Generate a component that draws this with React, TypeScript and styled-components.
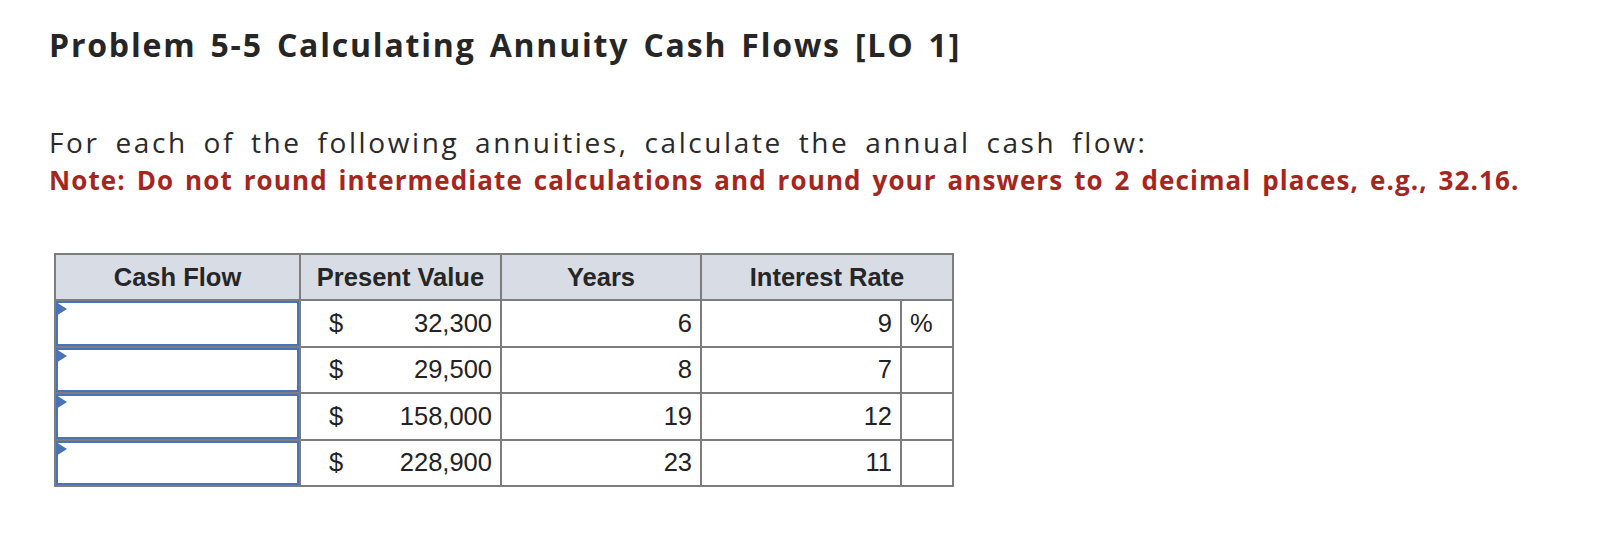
import React from "react";
import styled, { createGlobalStyle } from "styled-components";

const GlobalStyle = createGlobalStyle`
  html, body { margin: 0; padding: 0; background: #ffffff; }
  body { font-family: "Open Sans", "Lato", sans-serif; color: #2a2a2a; }
`;

const Page = styled.main`
  padding: 25px 0 0 49px;
  width: 1612px;
  height: 542px;
  box-sizing: border-box;
`;

const Title = styled.h1`
  margin: 0;
  font-family: "Open Sans", sans-serif;
  font-weight: 700;
  font-size: 32px;
  line-height: 40px;
  letter-spacing: 1.8px;
  word-spacing: 4px;
  color: #262626;
  white-space: nowrap;
`;

const Prompt = styled.p`
  margin: 59px 0 0;
  font-family: "Open Sans", sans-serif;
  font-size: 28px;
  line-height: 36px;
  letter-spacing: 2.6px;
  word-spacing: 6px;
  color: #2a2a2a;
  white-space: nowrap;
`;

const Note = styled.span`
  display: block;
  margin-top: 2px;
  font-size: 26px;
  font-weight: 700;
  letter-spacing: 1.1px;
  word-spacing: 3px;
  color: #a4261f;
`;

const Table = styled.table`
  margin: 55px 0 0 5px;
  border-collapse: collapse;
  table-layout: fixed;
  width: 900px;
  font-family: "Liberation Sans", Arial, sans-serif;
  font-size: 25.5px;
  color: #222;
`;

const HeadCell = styled.th`
  height: 44px;
  padding: 0;
  border: 2px solid #7d7d7d;
  background: #d8dce5;
  font-weight: 700;
  text-align: center;
  color: #262626;
`;

const Cell = styled.td<{ $align?: "left" | "right" }>`
  height: 44px;
  padding: 0 8px;
  border: 2px solid #7d7d7d;
  text-align: ${(p) => p.$align ?? "right"};
`;

const InputCell = styled.td`
  height: 44px;
  padding: 0;
  border: 2px solid #7d7d7d;
  position: relative;
`;

const AnswerBox = styled.input`
  display: block;
  box-sizing: border-box;
  width: 100%;
  height: 44.5px;
  margin: 0;
  border: 2px solid #4a72b6;
  background: #fff;
  outline: none;
  font: inherit;
`;

const Flag = styled.span`
  position: absolute;
  top: 1px;
  left: 0;
  width: 0;
  height: 0;
  border-top: 7px solid transparent;
  border-bottom: 7px solid transparent;
  border-left: 11px solid #4a72b6;
`;

const MoneyInner = styled.div`
  display: flex;
  justify-content: space-between;
  padding-left: 20px;
`;

const rows = [
  { pv: "32,300", years: "6", rate: "9", pct: "%" },
  { pv: "29,500", years: "8", rate: "7", pct: "" },
  { pv: "158,000", years: "19", rate: "12", pct: "" },
  { pv: "228,900", years: "23", rate: "11", pct: "" },
];

export default function App() {
  return (
    <>
      <GlobalStyle />
      <Page>
        <Title>Problem 5-5 Calculating Annuity Cash Flows [LO 1]</Title>
        <Prompt>
          For each of the following annuities, calculate the annual cash flow:
          <Note>
            Note: Do not round intermediate calculations and round your answers to 2 decimal places, e.g., 32.16.
          </Note>
        </Prompt>
        <Table>
          <colgroup>
            <col style={{ width: 245 }} />
            <col style={{ width: 201 }} />
            <col style={{ width: 200 }} />
            <col style={{ width: 200 }} />
            <col style={{ width: 52 }} />
          </colgroup>
          <thead>
            <tr>
              <HeadCell>Cash Flow</HeadCell>
              <HeadCell>Present Value</HeadCell>
              <HeadCell>Years</HeadCell>
              <HeadCell colSpan={2}>Interest Rate</HeadCell>
            </tr>
          </thead>
          <tbody>
            {rows.map((r, i) => (
              <tr key={i}>
                <InputCell>
                  <AnswerBox aria-label={`Cash flow ${i + 1}`} />
                  <Flag />
                </InputCell>
                <Cell>
                  <MoneyInner>
                    <span>$</span>
                    <span>{r.pv}</span>
                  </MoneyInner>
                </Cell>
                <Cell>{r.years}</Cell>
                <Cell>{r.rate}</Cell>
                <Cell $align="left">{r.pct}</Cell>
              </tr>
            ))}
          </tbody>
        </Table>
      </Page>
    </>
  );
}
